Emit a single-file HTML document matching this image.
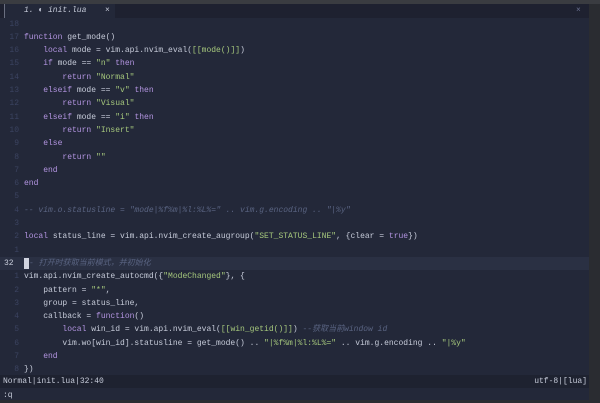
<!DOCTYPE html>
<html><head><meta charset="utf-8"><style>
*{margin:0;padding:0;box-sizing:border-box}
body{width:600px;height:403px;overflow:hidden;background:#2a2c31;position:relative;font-family:"Liberation Mono","Noto Sans CJK SC",monospace;font-size:8px;color:#c6cbd9}
#top{position:absolute;left:0;top:0;width:600px;height:4px;background:#3a3c41}
#main{position:absolute;left:0;top:4px;width:589px;height:396px;background:#232839}
#tabbar{position:absolute;left:0;top:4px;width:589px;height:14px;background:#1e2130}
#tab{position:absolute;left:4px;top:4px;width:111px;height:14px;background:#232839;border-left:1px solid #6a6f80}
.l{position:absolute;left:0;width:589px;height:13.3px;line-height:13.3px;white-space:pre}
.n{position:absolute;left:0;width:19px;text-align:right;color:#3b4360}
.c{position:absolute;left:24px}
.k{color:#b294e0}.s{color:#a5c77c}.cm{color:#5a6482;font-style:italic}
</style></head><body>
<div id="top"></div><div id="main"></div><div id="tabbar"></div>
<div id="tab"></div>
<div style="position:absolute;left:24px;top:4px;line-height:14px;font-style:italic;color:#c6cbd9">1. ◐ init.lua</div>
<div style="position:absolute;left:105px;top:4px;line-height:14px;color:#c6cbd9">×</div>
<div style="position:absolute;left:576px;top:4px;line-height:14px;color:#6a7090">×</div>
<div class="l" style="top:17.5px"><span class="n">18</span></div>
<div class="l" style="top:30.8px"><span class="n">17</span><span class="c"><span class="k">function</span> get_mode()</span></div>
<div class="l" style="top:44.1px"><span class="n">16</span><span class="c">    <span class="k">local</span> mode = vim.api.nvim_eval(<span class="s">[[mode()]]</span>)</span></div>
<div class="l" style="top:57.4px"><span class="n">15</span><span class="c">    <span class="k">if</span> mode == <span class="s">"n"</span> <span class="k">then</span></span></div>
<div class="l" style="top:70.7px"><span class="n">14</span><span class="c">        <span class="k">return</span> <span class="s">"Normal"</span></span></div>
<div class="l" style="top:84px"><span class="n">13</span><span class="c">    <span class="k">elseif</span> mode == <span class="s">"v"</span> <span class="k">then</span></span></div>
<div class="l" style="top:97.3px"><span class="n">12</span><span class="c">        <span class="k">return</span> <span class="s">"Visual"</span></span></div>
<div class="l" style="top:110.6px"><span class="n">11</span><span class="c">    <span class="k">elseif</span> mode == <span class="s">"i"</span> <span class="k">then</span></span></div>
<div class="l" style="top:123.9px"><span class="n">10</span><span class="c">        <span class="k">return</span> <span class="s">"Insert"</span></span></div>
<div class="l" style="top:137.2px"><span class="n">9</span><span class="c">    <span class="k">else</span></span></div>
<div class="l" style="top:150.5px"><span class="n">8</span><span class="c">        <span class="k">return</span> <span class="s">""</span></span></div>
<div class="l" style="top:163.8px"><span class="n">7</span><span class="c">    <span class="k">end</span></span></div>
<div class="l" style="top:177.1px"><span class="n">6</span><span class="c"><span class="k">end</span></span></div>
<div class="l" style="top:190.4px"><span class="n">5</span></div>
<div class="l" style="top:203.7px"><span class="n">4</span><span class="c cm">-- vim.o.statusline = "mode|%f%m|%l:%L%=" .. vim.g.encoding .. "|%y"</span></div>
<div class="l" style="top:217px"><span class="n">3</span></div>
<div class="l" style="top:230.3px"><span class="n">2</span><span class="c"><span class="k">local</span> status_line = vim.api.nvim_create_augroup(<span class="s">"SET_STATUS_LINE"</span>, {clear = <span class="k">true</span>})</span></div>
<div class="l" style="top:243.6px"><span class="n">1</span></div>
<div class="l" style="top:256.9px;background:#2a3043"><span style="position:absolute;left:4px;color:#c6cbd9">32</span><span style="position:absolute;left:24px;top:1px;width:5px;height:11px;background:#d0d4e0"></span><span class="c cm" style="left:29px">- 打开时获取当前模式，并初始化</span></div>
<div class="l" style="top:270.2px"><span class="n">1</span><span class="c">vim.api.nvim_create_autocmd({<span class="s">"ModeChanged"</span>}, {</span></div>
<div class="l" style="top:283.5px"><span class="n">2</span><span class="c">    pattern = <span class="s">"*"</span>,</span></div>
<div class="l" style="top:296.8px"><span class="n">3</span><span class="c">    group = status_line,</span></div>
<div class="l" style="top:310.1px"><span class="n">4</span><span class="c">    callback = <span class="k">function</span>()</span></div>
<div class="l" style="top:323.4px"><span class="n">5</span><span class="c">        <span class="k">local</span> win_id = vim.api.nvim_eval(<span class="s">[[win_getid()]]</span>) <span class="cm">--获取当前window id</span></span></div>
<div class="l" style="top:336.7px"><span class="n">6</span><span class="c">        vim.wo[win_id].statusline = get_mode() .. <span class="s">"|%f%m|%l:%L%="</span> .. vim.g.encoding .. <span class="s">"|%y"</span></span></div>
<div class="l" style="top:350px"><span class="n">7</span><span class="c">    <span class="k">end</span></span></div>
<div class="l" style="top:363.3px"><span class="n">8</span><span class="c">})</span></div>
<div class="l" style="top:374.5px;height:13px;line-height:13px;background:#1e2230"><span style="position:absolute;left:3px">Normal|init.lua|32:40</span><span style="position:absolute;right:2px">utf-8|[lua]</span></div>
<div class="l" style="top:388.5px"><span style="position:absolute;left:3px">:q</span></div>
</body></html>
